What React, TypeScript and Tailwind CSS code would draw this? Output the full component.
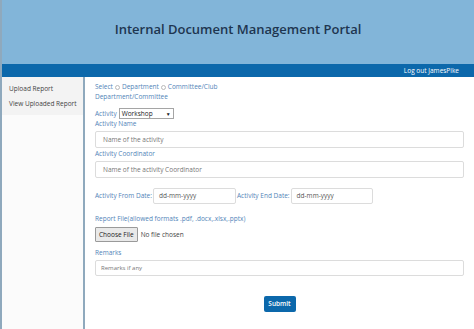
import React from "react";

const Radio = () => (
  <span className="inline-block w-[5px] h-[5px] rounded-full border border-[#b9b9b9] bg-white mx-[2px] align-middle" />
);

export default function App() {
  return (
    <div className="w-[474px] h-[329px] flex flex-col bg-white overflow-hidden border-l-2 border-[#8fa9bd]" style={{ fontFamily: '"Open Sans", "Noto Sans", sans-serif' }}>
      <div className="h-[64px] bg-[#82b5d9] flex items-center justify-center">
        <h1 className="text-[13px] font-semibold text-[#1e3550] mt-[-4px]">Internal Document Management Portal</h1>
      </div>
      <div className="h-[13px] bg-[#0c68ab] flex items-center justify-end pr-[15px]">
        <span className="text-[6.5px] text-white">Log out JamesPike</span>
      </div>
      <div className="flex flex-1">
        <div className="w-[83px] border-r-2 border-[#8fa9bd] bg-[#fbfbfb]">
          <div className="bg-[#f3f3f3] pt-[7px] pb-[6px] px-[7px] text-[6.5px] text-[#444] flex flex-col gap-[5px] whitespace-nowrap">
            <span>Upload Report</span>
            <span>View Uploaded Report</span>
          </div>
        </div>
        <div className="flex-1 pl-[10px] pr-[10px] pt-[5px] text-[6.5px] text-[#5284b8]">
          <div className="leading-[10px]">
            Select<Radio />Department<Radio />Committee/Club
          </div>
          <div className="leading-[10px]">Department/Committee</div>
          <div className="flex items-center mt-[6px] leading-[10px]">
            <span>Activity</span>
            <div className="ml-[2px] w-[55px] h-[11px] border border-[#a5a5a5] flex items-center justify-between px-[2px] text-[#222] bg-white">
              <span>Workshop</span>
              <span className="text-[5px]">▼</span>
            </div>
          </div>
          <div className="leading-[10px]">Activity Name</div>
          <div className="mt-[2px] h-[17px] border border-[#dcdcdc] rounded-[2px] flex items-center pl-[7px] text-[#777]">Name of the activity</div>
          <div className="leading-[10px] mt-[1px]">Activity Coordinator</div>
          <div className="mt-[2px] h-[17px] border border-[#dcdcdc] rounded-[2px] flex items-center pl-[7px] text-[#777]">Name of the activity Coordinator</div>
          <div className="flex items-center mt-[10px]">
            <span>Activity From Date:</span>
            <div className="ml-[1px] w-[83px] h-[16px] border border-[#dcdcdc] rounded-[2px] flex items-center pl-[5px] text-[#555]">dd-mm-yyyy</div>
            <span className="ml-[1px]">Activity End Date:</span>
            <div className="ml-[1px] w-[82px] h-[16px] border border-[#dcdcdc] rounded-[2px] flex items-center pl-[5px] text-[#555]">dd-mm-yyyy</div>
          </div>
          <div className="leading-[10px] mt-[10px]">Report File(allowed formats .pdf, .docx,.xlsx,.pptx)</div>
          <div className="flex items-center mt-[3px]">
            <div className="h-[15px] px-[3px] border border-[#9a9a9a] bg-[#e9e9e9] rounded-[1px] flex items-center text-[#222]">Choose File</div>
            <span className="ml-[3px] text-[#444]">No file chosen</span>
          </div>
          <div className="leading-[10px] mt-[6px]">Remarks</div>
          <div className="mt-[2px] h-[16px] border border-[#dcdcdc] rounded-[2px] flex items-center pl-[5px] text-[#777] text-[6px]">Remarks if any</div>
          <div className="flex justify-center mt-[20px]">
            <div className="h-[16px] w-[32px] bg-[#0c68ab] rounded-[2px] flex items-center justify-center text-white font-semibold">Submit</div>
          </div>
        </div>
      </div>
    </div>
  );
}
